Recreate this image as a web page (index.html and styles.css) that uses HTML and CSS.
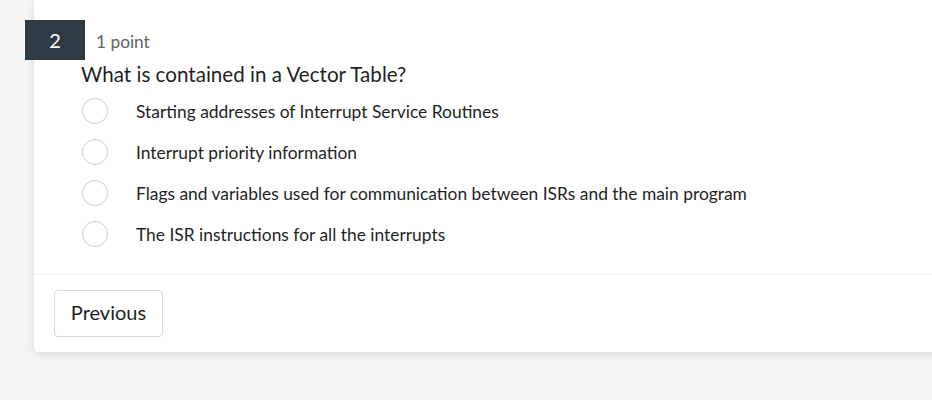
FILE: index.html
```html
<!DOCTYPE html>
<html>
<head>
<meta charset="utf-8">
<link rel="stylesheet" href="styles.css">
</head>
<body>
<div class="card">
  <div class="question">
    <div class="header">
      <div class="badge">2</div>
      <div class="points">1 point</div>
    </div>
    <div class="prompt">What is contained in a Vector Table?</div>
    <div class="options">
      <label class="option"><span class="radio"></span><span class="label">Starting addresses of Interrupt Service Routines</span></label>
      <label class="option"><span class="radio"></span><span class="label">Interrupt priority information</span></label>
      <label class="option"><span class="radio"></span><span class="label">Flags and variables used for communication between ISRs and the main program</span></label>
      <label class="option"><span class="radio"></span><span class="label">The ISR instructions for all the interrupts</span></label>
    </div>
  </div>
  <div class="footer">
    <button class="btn">Previous</button>
  </div>
</div>
</body>
</html>
```
FILE: styles.css
```css
html, body {
  margin: 0;
  padding: 0;
  background: #f5f5f5;
  font-family: Lato, "Open Sans", sans-serif;
  overflow: hidden;
}
body {
  padding-left: 34px;
  height: 400px;
  box-sizing: border-box;
}
.card {
  background: #fff;
  border-radius: 0 0 0 4px;
  box-shadow: 0 2px 8px rgba(0,0,0,0.12);
  margin-right: -10px;
  padding-top: 20px;
}
.question {
  padding-left: 47px;
  padding-bottom: 27px;
  border-bottom: 1px solid #efefef;
}
.header {
  display: flex;
  align-items: center;
  margin-left: -56px;
}
.badge {
  width: 60px;
  height: 40px;
  background: #2e3a44;
  color: #fff;
  font-size: 20px;
  display: flex;
  align-items: center;
  justify-content: center;
}
.points {
  margin-left: 11px;
  font-size: 17.3px;
  color: #636363;
  margin-top: 2px;
}
.prompt {
  margin-top: 2px;
  font-size: 20.6px;
  line-height: 24px;
  color: #1f1f1f;
}
.options {
  margin-top: 12px;
  display: flex;
  flex-direction: column;
  gap: 15px;
}
.option {
  display: flex;
  align-items: center;
  height: 26px;
}
.radio {
  width: 24px;
  height: 24px;
  margin-left: 1px;
  border: 1px solid #cfcfcf;
  border-radius: 50%;
  flex: none;
}
.label {
  margin-left: 28px;
  font-size: 17.4px;
  color: #1f1f1f;
}
.footer {
  padding: 15px 20px 15px;
}
.btn {
  font-family: Lato, "Open Sans", sans-serif;
  font-size: 20px;
  color: #1f1f1f;
  background: #fff;
  border: 1px solid #d9d9d9;
  border-radius: 4px;
  height: 47px;
  width: 109px;
  padding: 0 0 3px;
}
```
